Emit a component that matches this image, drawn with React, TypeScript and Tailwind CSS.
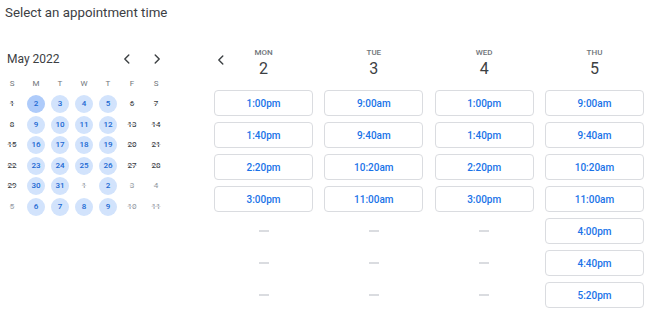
import React from "react";

const weekdays = ["S", "M", "T", "W", "T", "F", "S"];

type Day = { n: number; avail: boolean; cur: boolean; sel?: boolean };

const availSet = new Set([2, 3, 4, 5, 9, 10, 11, 12, 16, 17, 18, 19, 23, 24, 25, 26, 30, 31]);
const days: Day[] = [];
for (let i = 1; i <= 31; i++) days.push({ n: i, avail: availSet.has(i), cur: true, sel: i === 2 });
const nextAvail = new Set([2, 6, 7, 8, 9]);
for (let i = 1; i <= 11; i++) days.push({ n: i, avail: nextAvail.has(i), cur: false });

const rows: Day[][] = [];
for (let r = 0; r < 6; r++) rows.push(days.slice(r * 7, r * 7 + 7));

const cols = [
  { dow: "MON", d: "2", times: ["1:00pm", "1:40pm", "2:20pm", "3:00pm"] },
  { dow: "TUE", d: "3", times: ["9:00am", "9:40am", "10:20am", "11:00am"] },
  { dow: "WED", d: "4", times: ["1:00pm", "1:40pm", "2:20pm", "3:00pm"] },
  { dow: "THU", d: "5", times: ["9:00am", "9:40am", "10:20am", "11:00am", "4:00pm", "4:40pm", "5:20pm"] },
];

function ChevronLeft() {
  return (
    <svg width="10" height="12" viewBox="0 0 10 12" fill="none">
      <path d="M6.8 2 L2.8 6 L6.8 10" stroke="#3c4043" strokeWidth="1.4" strokeLinecap="round" strokeLinejoin="round" />
    </svg>
  );
}
function ChevronRight() {
  return (
    <svg width="10" height="12" viewBox="0 0 10 12" fill="none">
      <path d="M3.2 2 L7.2 6 L3.2 10" stroke="#3c4043" strokeWidth="1.4" strokeLinecap="round" strokeLinejoin="round" />
    </svg>
  );
}

export default function App() {
  return (
    <div className="w-[650px] h-[312px] bg-white overflow-hidden font-['Roboto',sans-serif] text-[#3c4043]">
      <div className="pl-[5px] pt-[4px] h-[26px] text-[13.3px] leading-[18px] text-[#3c4043]">
        Select an appointment time
      </div>
      <div className="flex">
        <div className="w-[170px] shrink-0">
          <div className="mt-[23px] h-[20px] flex items-center">
            <div className="pl-[7px] text-[12px] text-[#3c4043]">May 2022</div>
            <div className="ml-auto flex items-center gap-[20px] pr-[8px]">
              <ChevronLeft />
              <ChevronRight />
            </div>
          </div>
          <div className="mt-[5px] h-[20px] grid grid-cols-[repeat(7,24px)] items-center">
            {weekdays.map((w, i) => (
              <div key={i} className="text-center text-[8px] text-[#70757a]">
                {w}
              </div>
            ))}
          </div>
          <div className="mt-[1px] flex flex-col gap-[2.6px]">
            {rows.map((row, ri) => (
              <div key={ri} className="grid grid-cols-[repeat(7,24px)] h-[18px]">
                {row.map((d, di) => (
                  <div key={di} className="flex items-center justify-center">
                    {d.avail ? (
                      <div
                        className={
                          "w-[18px] h-[18px] rounded-full flex items-center justify-center text-[8px] font-medium text-[#1967d2] " +
                          (d.sel ? "bg-[#aecbfa]" : "bg-[#d2e3fc]")
                        }
                      >
                        {d.n}
                      </div>
                    ) : (
                      <div
                        className={
                          "text-[8px] font-medium line-through " +
                          (d.cur
                            ? "text-[#3c4043] decoration-[#c4c7cb]"
                            : "text-[#9aa0a6] decoration-[#dadce0]")
                        }
                      >
                        {d.n}
                      </div>
                    )}
                  </div>
                ))}
              </div>
            ))}
          </div>
        </div>
        <div className="ml-[44px] relative">
          <div className="absolute left-[2px] top-[28px]">
            <ChevronLeft />
          </div>
          <div className="flex gap-[11.33px] pt-[21px]">
            {cols.map((c, ci) => (
              <div key={ci} className="w-[99px] flex flex-col items-center">
                <div className="text-[8px] leading-[12px] font-medium text-[#70757a]">{c.dow}</div>
                <div className="text-[16px] leading-[22px] text-[#3c4043] mt-[-1px]">{c.d}</div>
                <div className="mt-[10px] w-full flex flex-col gap-[6px]">
                  {Array.from({ length: 7 }).map((_, ti) =>
                    c.times[ti] ? (
                      <div
                        key={ti}
                        className="h-[26px] w-full rounded-[4px] border border-[#dadce0] flex items-center justify-center text-[10px] font-medium text-[#1a73e8]"
                      >
                        {c.times[ti]}
                      </div>
                    ) : (
                      <div key={ti} className="h-[26px] w-full flex items-center justify-center">
                        <div className="w-[10px] h-[1.5px] bg-[#dadce0]" />
                      </div>
                    )
                  )}
                </div>
              </div>
            ))}
          </div>
        </div>
      </div>
    </div>
  );
}
